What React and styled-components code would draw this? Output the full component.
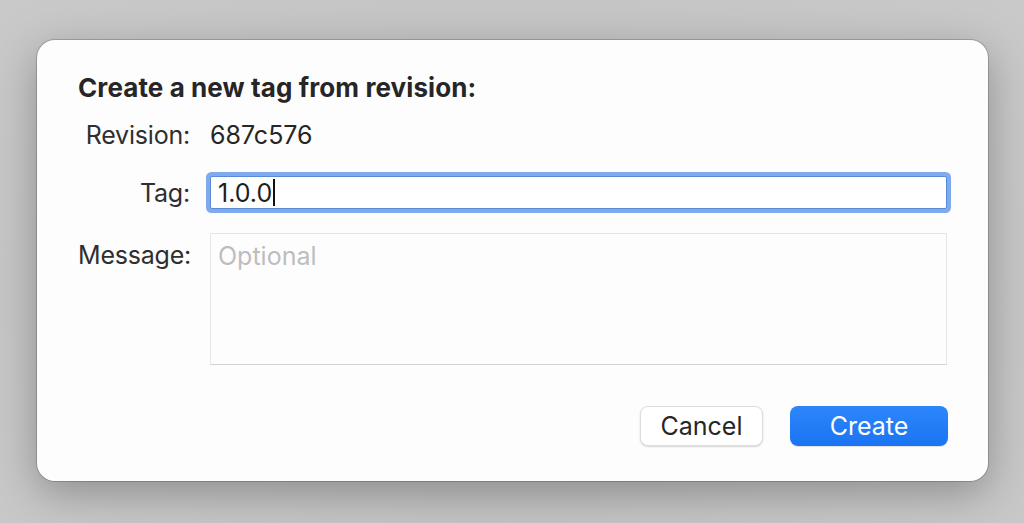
import React from 'react';
import styled, { createGlobalStyle } from 'styled-components';

const GlobalStyle = createGlobalStyle`
  html, body {
    margin: 0;
    padding: 0;
    height: 523px;
    overflow: hidden;
    background: #c6c6c6;
    font-family: Inter, "Liberation Sans", "DejaVu Sans", sans-serif;
    -webkit-font-smoothing: antialiased;
  }
`;

const Backdrop = styled.div`
  width: 1024px;
  height: 523px;
  padding: 40px 0 0 37px;
  box-sizing: border-box;
  background: radial-gradient(ellipse at 50% 55%, #b4b4b4 0%, #c4c4c4 60%, #c9c9c9 100%);
`;

const Dialog = styled.div`
  width: 951px;
  height: 441px;
  box-sizing: border-box;
  padding: 34px 41px 35px 41px;
  background: #fdfdfd;
  border-radius: 18px;
  box-shadow: 0 0 0 1px rgba(0, 0, 0, 0.18), 0 12px 40px rgba(0, 0, 0, 0.28);
  display: flex;
  flex-direction: column;
`;

const Title = styled.h1`
  margin: 0;
  font-size: 26px;
  line-height: 28px;
  font-weight: 700;
  color: #262626;
  letter-spacing: 0.1px;
`;

const Form = styled.div`
  display: grid;
  grid-template-columns: 112px 1fr;
  column-gap: 20px;
  align-items: center;
`;

const Label = styled.div`
  text-align: right;
  font-size: 25px;
  line-height: 28px;
  color: #2f2f2f;
  letter-spacing: -0.2px;
  white-space: nowrap;
  margin-top: ${(p) => p.$mt || 0}px;
  align-self: ${(p) => (p.$top ? 'start' : 'center')};
  padding-top: ${(p) => (p.$top ? 8 : 0)}px;
`;

const Value = styled.div`
  font-size: 25px;
  line-height: 28px;
  color: #262626;
  margin-top: ${(p) => p.$mt || 0}px;
`;

const TagField = styled.div`
  margin-top: 27px;
  height: 33px;
  box-sizing: border-box;
  border: 1px solid #5a8ad6;
  border-radius: 2px;
  background: #fff;
  box-shadow: 0 0 0 4px #7eaaee;
  padding: 0 7px;
  display: flex;
  align-items: center;
  font-size: 25px;
  color: #1e1e1e;
`;

const Caret = styled.span`
  display: inline-block;
  width: 1.5px;
  height: 27px;
  background: #111;
  margin-left: 1px;
`;

const MessageBox = styled.textarea`
  margin-top: 24px;
  height: 132px;
  box-sizing: border-box;
  border: 1px solid #e6e6e6;
  border-bottom-color: #d2d2d2;
  background: #fdfdfd;
  padding: 7px 7px;
  font-family: inherit;
  font-size: 25px;
  line-height: 30px;
  color: #222;
  resize: none;
  outline: none;
  &::placeholder {
    color: #bdbdbd;
  }
`;

const Footer = styled.div`
  margin-top: auto;
  display: flex;
  justify-content: flex-end;
  gap: 27px;
  margin-right: -1px;
`;

const Button = styled.button`
  width: ${(p) => p.$w}px;
  height: 40px;
  border-radius: 8px;
  font-family: inherit;
  font-size: 25px;
  padding: 0;
  cursor: pointer;
  ${(p) =>
    p.$primary
      ? `
    border: none;
    color: #fff;
    background: linear-gradient(#2c86fb, #1b74f2);
    box-shadow: 0 1px 1px rgba(0,0,0,0.12);
  `
      : `
    border: 1px solid #dedede;
    color: #262626;
    background: #fff;
    box-shadow: 0 1px 2px rgba(0,0,0,0.16);
  `}
`;

export default function App() {
  return (
    <>
      <GlobalStyle />
      <Backdrop>
        <Dialog>
          <Title>Create a new tag from revision:</Title>
          <Form>
            <Label $mt={19}>Revision:</Label>
            <Value $mt={19}>687c576</Value>
            <Label $mt={27}>Tag:</Label>
            <TagField>
              1.0.0<Caret />
            </TagField>
            <Label $mt={24} $top>Message:</Label>
            <MessageBox placeholder="Optional" />
          </Form>
          <Footer>
            <Button $w={123}>Cancel</Button>
            <Button $w={158} $primary>Create</Button>
          </Footer>
        </Dialog>
      </Backdrop>
    </>
  );
}
